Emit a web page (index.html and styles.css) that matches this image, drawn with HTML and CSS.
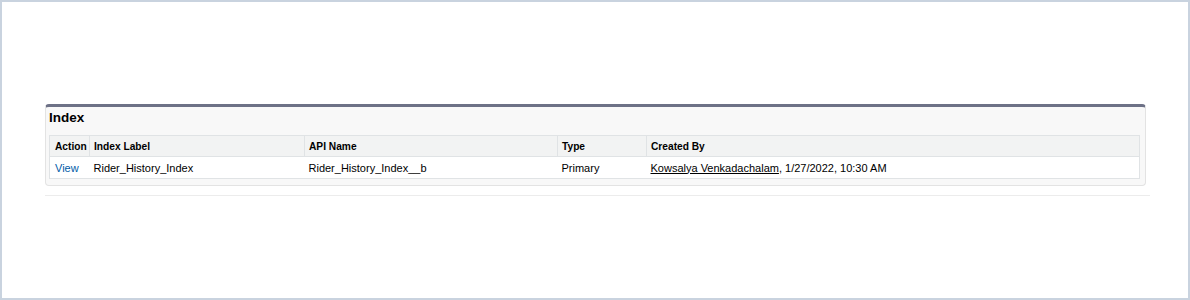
FILE: index.html
```html
<!DOCTYPE html>
<html>
<head>
<meta charset="utf-8">
<link rel="stylesheet" href="styles.css">
</head>
<body>
<div class="frame">
  <div class="panel">
    <div class="panel-head">Index</div>
    <table class="list">
      <thead>
        <tr>
          <th class="c-action">Action</th>
          <th class="c-label">Index Label</th>
          <th class="c-api">API Name</th>
          <th class="c-type">Type</th>
          <th class="c-created">Created By</th>
        </tr>
      </thead>
      <tbody>
        <tr>
          <td><a class="action-link" href="#">View</a></td>
          <td>Rider_History_Index</td>
          <td>Rider_History_Index__b</td>
          <td>Primary</td>
          <td><a class="user-link" href="#">Kowsalya Venkadachalam</a>, 1/27/2022, 10:30 AM</td>
        </tr>
      </tbody>
    </table>
  </div>
  <div class="divider"></div>
</div>
</body>
</html>
```
FILE: styles.css
```css
* { box-sizing: border-box; }
html, body { margin: 0; padding: 0; background: #fff; }
body { font-family: "Liberation Sans", Arial, sans-serif; color: #000; }

.frame {
  width: 1190px;
  height: 300px;
  border: 2px solid #c9d3df;
  padding: 102px 0 0 43px;
}

.panel {
  width: 1101px;
  background: #f8f8f8;
  border: 1px solid #e3e3e3;
  border-top: 3px solid #6d7186;
  border-radius: 4px;
  padding: 0 5px 6px 3px;
}

.panel-head {
  font-size: 13.5px;
  font-weight: bold;
  color: #000;
  height: 28px;
  line-height: 18px;
  padding-top: 2px;
}

.list {
  width: 100%;
  table-layout: fixed;
  border-collapse: collapse;
  border: 1px solid #e0e3e5;
  background: #fff;
  font-size: 11px;
}

.list th {
  background: #f2f3f3;
  font-size: 10.2px;
  font-weight: bold;
  text-align: left;
  height: 21px;
  padding: 0 4px;
  border-left: 1px solid #e0e3e5;
  border-bottom: 1px solid #e0e3e5;
  color: #000;
  white-space: nowrap;
}
.list th:first-child { border-left: none; padding-left: 5px; }

.list td {
  height: 22px;
  padding: 0 4px;
  vertical-align: middle;
  color: #000;
  white-space: nowrap;
}
.list td:first-child { padding-left: 5px; }

.c-action { width: 40px; }
.c-label { width: 215px; }
.c-api { width: 253px; }
.c-type { width: 89px; }

.action-link { color: #015ba7; text-decoration: none; }
.user-link { color: #000; text-decoration: underline; }

.divider {
  margin-top: 9px;
  width: 1105px;
  height: 1px;
  background: #ececec;
}
```
